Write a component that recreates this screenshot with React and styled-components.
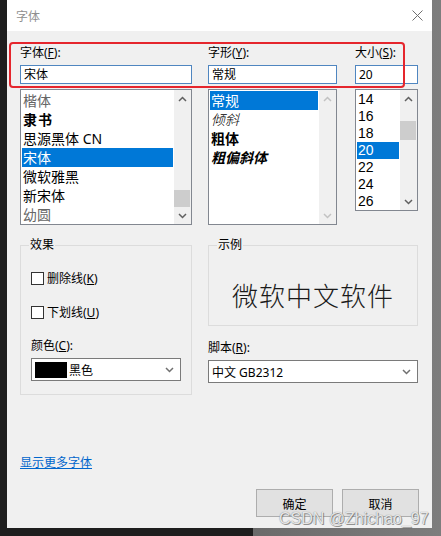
import React from 'react';
import styled, { createGlobalStyle } from 'styled-components';

const GlobalStyle = createGlobalStyle`
  html, body { margin: 0; padding: 0; background: #1e1e1e; }
  body { font-family: "Noto Sans", "Noto Sans CJK SC", sans-serif; }
`;

const Screen = styled.div`
  position: relative;
  width: 441px;
  height: 536px;
  overflow: hidden;
  display: flex;
  padding-left: 7px;
  box-sizing: border-box;
  background: linear-gradient(to right, #1e1e1e 253px, #6a6a6a 253px, #7d7d7d 441px);
`;

const Dialog = styled.div`
  width: 425px;
  height: 528px;
  background: #f0f0f0;
  display: flex;
  flex-direction: column;
  color: #000;
  font-size: 12px;
`;

const TitleBar = styled.div`
  height: 31px;
  background: #fff;
  display: flex;
  align-items: center;
  justify-content: space-between;
  padding: 0 9px;
  color: #8f8f8f;
  font-size: 12px;
`;

const Body = styled.div`
  flex: 1;
  display: flex;
  flex-direction: column;
  padding: 14px 13px 0 13px;
`;

const TopRow = styled.div`
  display: flex;
  align-items: flex-start;
`;

const Column = styled.div`
  width: ${(p) => p.$w}px;
  margin-right: ${(p) => p.$gap || 0}px;
  display: flex;
  flex-direction: column;
`;

const Label = styled.div`
  height: 16px;
  line-height: 16px;
  font-size: 12px;
  margin-bottom: 4px;
  white-space: nowrap;
`;

const Input = styled.div`
  height: 19px;
  box-sizing: border-box;
  border: 1px solid #4f86c0;
  background: #fff;
  padding-left: 3px;
  line-height: 17px;
  font-size: 12px;
`;

const ListBox = styled.div`
  margin-top: 5px;
  height: ${(p) => p.$h}px;
  box-sizing: border-box;
  border: 1px solid #828790;
  background: #fff;
  display: flex;
  overflow: hidden;
`;

const Items = styled.div`
  flex: 1;
  padding: 1px;
  display: flex;
  flex-direction: column;
  overflow: hidden;
`;

const Item = styled.div`
  height: ${(p) => p.$rh}px;
  line-height: ${(p) => p.$rh}px;
  padding-left: 1px;
  font-size: 14px;
  white-space: nowrap;
  font-family: ${(p) => (p.$latin ? '"Liberation Sans", sans-serif' : 'inherit')};
  background: ${(p) => (p.$sel ? '#0078d7' : 'transparent')};
  color: ${(p) => (p.$sel ? '#fff' : p.$tone || '#000')};
  font-weight: ${(p) => p.$weight || 400};
  font-style: ${(p) => (p.$italic ? 'italic' : 'normal')};
  letter-spacing: ${(p) => p.$ls || 0}px;
`;

const ScrollBar = styled.div`
  width: 17px;
  background: #f0f0f0;
  display: flex;
  flex-direction: column;
`;

const ArrowBtn = styled.div`
  height: 17px;
  display: flex;
  align-items: center;
  justify-content: center;
`;

const Track = styled.div`
  flex: 1;
`;

const Thumb = styled.div`
  margin: ${(p) => p.$top}px 1px 0 0;
  height: ${(p) => p.$h}px;
  background: #cdcdcd;
`;

const Chevron = ({ up, color = '#606060' }) => (
  <svg width="9" height="6" viewBox="0 0 9 6">
    <polyline
      points={up ? '1,5 4.5,1.5 8,5' : '1,1 4.5,4.5 8,1'}
      fill="none"
      stroke={color}
      strokeWidth="1.5"
    />
  </svg>
);

const Scroller = ({ thumbTop, thumbH, disabled }) => (
  <ScrollBar>
    <ArrowBtn><Chevron up color={disabled ? '#c2c2c2' : '#606060'} /></ArrowBtn>
    <Track>{thumbH ? <Thumb $top={thumbTop} $h={thumbH} /> : null}</Track>
    <ArrowBtn><Chevron color={disabled ? '#c2c2c2' : '#606060'} /></ArrowBtn>
  </ScrollBar>
);

const BottomRow = styled.div`
  display: flex;
  align-items: flex-start;
  margin-top: 12px;
  gap: 16px;
`;

const Group = styled.fieldset`
  margin: 0;
  min-width: 0;
  box-sizing: border-box;
  width: ${(p) => p.$w}px;
  height: ${(p) => (p.$h ? `${p.$h}px` : 'auto')};
  border: 1px solid #dcdcdc;
  padding: 17px 10px 13px 10px;
`;

const Legend = styled.legend`
  padding: 0 1px;
  margin-left: -2px;
  height: 16px;
  line-height: 16px;
  font-size: 12px;
`;

const CheckRow = styled.label`
  display: flex;
  align-items: center;
  height: 16px;
  margin-bottom: 18px;
  font-size: 12px;
`;

const Box = styled.span`
  width: 13px;
  height: 13px;
  box-sizing: border-box;
  border: 1px solid #333;
  background: #fff;
  margin-right: 3px;
`;

const Select = styled.div`
  width: ${(p) => (p.$w ? `${p.$w}px` : 'auto')};
  height: 23px;
  box-sizing: border-box;
  border: 1px solid #7a7a7a;
  background: #fff;
  display: flex;
  align-items: center;
  padding: 0 6px 0 3px;
  margin-top: ${(p) => p.$mt || 0}px;
  font-size: 12px;
`;

const SelectText = styled.span`
  flex: 1;
  white-space: nowrap;
`;

const Swatch = styled.span`
  width: 32px;
  height: 16px;
  background: #000;
  margin-right: 2px;
`;

const SampleText = styled.div`
  padding-top: 10px;
  text-align: center;
  line-height: 30px;
  font-size: 26px;
  font-weight: 300;
  color: #1a1a1a;
  letter-spacing: 1px;
  font-family: "Noto Sans CJK SC", sans-serif;
`;

const RightCol = styled.div`
  width: 210px;
  display: flex;
  flex-direction: column;
`;

const SubLabel = styled(Label)`
  margin-top: ${(p) => p.$mt || 0}px;
  margin-bottom: 4px;
`;

const MoreLink = styled.a`
  margin-top: 60px;
  height: 16px;
  line-height: 16px;
  align-self: flex-start;
  color: #0066cc;
  text-decoration: underline;
  font-size: 12px;
`;

const Buttons = styled.div`
  margin-top: 18px;
  display: flex;
  justify-content: flex-end;
  gap: 9px;
`;

const Button = styled.button`
  width: 77px;
  height: 28px;
  background: #e1e1e1;
  border: 1px solid #adadad;
  font-size: 12px;
  font-family: "Noto Sans CJK SC", sans-serif;
  color: #000;
  padding: 0;
`;

const RedMark = styled.div`
  position: absolute;
  left: 9px;
  top: 42px;
  width: 396px;
  height: 46px;
  box-sizing: border-box;
  border: 2px solid #e5262d;
  border-radius: 4px;
  pointer-events: none;
`;

const Watermark = styled.div`
  position: absolute;
  left: 279px;
  top: 510px;
  font-family: "Liberation Sans", sans-serif;
  font-size: 16px;
  color: rgba(245, 245, 245, 0.9);
  text-shadow: 0 0 1px #6d6d6d, 1px 1px 0 rgba(90, 90, 90, 0.6);
  white-space: nowrap;
  pointer-events: none;
`;

const CloseIcon = () => (
  <svg width="11" height="11" viewBox="0 0 11 11">
    <path d="M0.5 0.5 L10.5 10.5 M10.5 0.5 L0.5 10.5" stroke="#6f6f6f" strokeWidth="1" />
  </svg>
);

const fonts = [
  { t: '楷体', tone: '#666' },
  { t: '隶书', weight: 700, ls: 1 },
  { t: '思源黑体 CN' },
  { t: '宋体', sel: true },
  { t: '微软雅黑' },
  { t: '新宋体' },
  { t: '幼圆', tone: '#666' },
];

const styles = [
  { t: '常规', sel: true },
  { t: '倾斜', italic: true, weight: 300 },
  { t: '粗体', weight: 700 },
  { t: '粗偏斜体', italic: true, weight: 700 },
];

const sizes = ['14', '16', '18', '20', '22', '24', '26'];

export default function App() {
  return (
    <>
      <GlobalStyle />
      <Screen>
        <Dialog>
          <TitleBar>
            <span>字体</span>
            <CloseIcon />
          </TitleBar>
          <Body>
            <TopRow>
              <Column $w={172} $gap={16}>
                <Label>字体(<u>F</u>):</Label>
                <Input>宋体</Input>
                <ListBox $h={136}>
                  <Items>
                    {fonts.map((f) => (
                      <Item key={f.t} $rh={19} $sel={f.sel} $tone={f.tone} $weight={f.weight} $ls={f.ls}>
                        {f.t}
                      </Item>
                    ))}
                  </Items>
                  <Scroller thumbTop={83} thumbH={17} />
                </ListBox>
              </Column>
              <Column $w={129} $gap={18}>
                <Label>字形(<u>Y</u>):</Label>
                <Input>常规</Input>
                <ListBox $h={136}>
                  <Items>
                    {styles.map((s) => (
                      <Item key={s.t} $rh={19} $sel={s.sel} $italic={s.italic} $weight={s.weight}>
                        {s.t}
                      </Item>
                    ))}
                  </Items>
                  <Scroller disabled />
                </ListBox>
              </Column>
              <Column $w={63}>
                <Label>大小(<u>S</u>):</Label>
                <Input>20</Input>
                <ListBox $h={122}>
                  <Items>
                    {sizes.map((s) => (
                      <Item key={s} $rh={17} $latin $sel={s === '20'}>
                        {s}
                      </Item>
                    ))}
                  </Items>
                  <Scroller thumbTop={14} thumbH={19} />
                </ListBox>
              </Column>
            </TopRow>

            <BottomRow>
              <Group $w={172}>
                <Legend>效果</Legend>
                <CheckRow><Box />删除线(<u>K</u>)</CheckRow>
                <CheckRow><Box />下划线(<u>U</u>)</CheckRow>
                <SubLabel>颜色(<u>C</u>):</SubLabel>
                <Select $w={150} $mt={2}>
                  <Swatch />
                  <SelectText>黑色</SelectText>
                  <Chevron color="#707070" />
                </Select>
              </Group>
              <RightCol>
                <Group $w={210} $h={89}>
                  <Legend>示例</Legend>
                  <SampleText>微软中文软件</SampleText>
                </Group>
                <SubLabel $mt={14}>脚本(<u>R</u>):</SubLabel>
                <Select>
                  <SelectText>中文 GB2312</SelectText>
                  <Chevron color="#707070" />
                </Select>
              </RightCol>
            </BottomRow>

            <MoreLink>显示更多字体</MoreLink>

            <Buttons>
              <Button>确定</Button>
              <Button>取消</Button>
            </Buttons>
          </Body>
        </Dialog>
        <RedMark />
        <Watermark>CSDN @Zhichao_97</Watermark>
      </Screen>
    </>
  );
}
